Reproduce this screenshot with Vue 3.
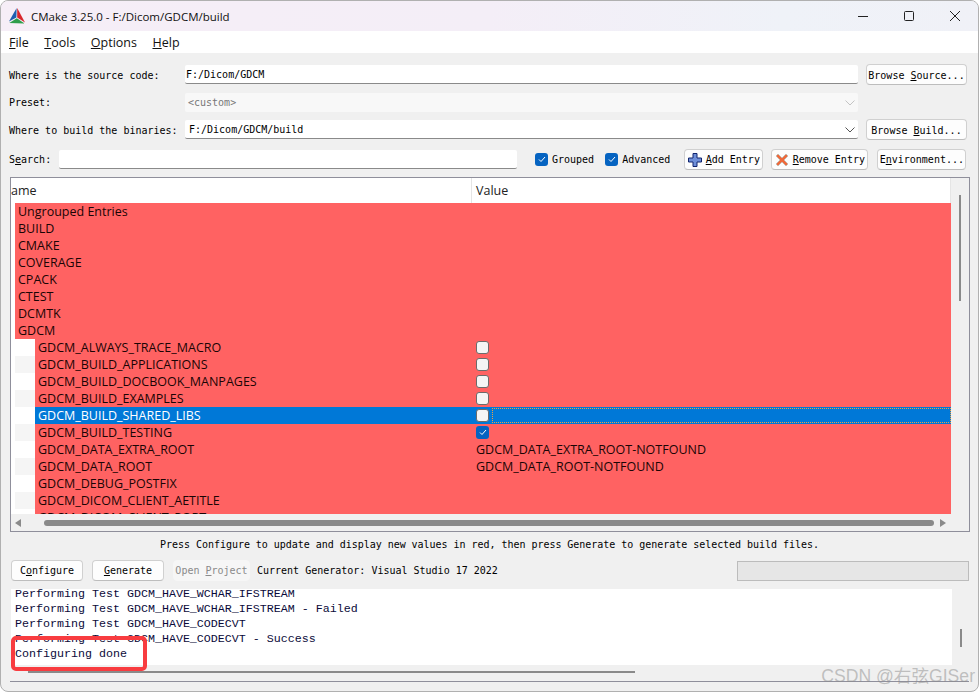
<script setup>
const topRows = ['Ungrouped Entries', 'BUILD', 'CMAKE', 'COVERAGE', 'CPACK', 'CTEST', 'DCMTK', 'GDCM']
const subRows = [
  { name: 'GDCM_ALWAYS_TRACE_MACRO', check: 'off' },
  { name: 'GDCM_BUILD_APPLICATIONS', check: 'off' },
  { name: 'GDCM_BUILD_DOCBOOK_MANPAGES', check: 'off' },
  { name: 'GDCM_BUILD_EXAMPLES', check: 'off' },
  { name: 'GDCM_BUILD_SHARED_LIBS', check: 'off', selected: true },
  { name: 'GDCM_BUILD_TESTING', check: 'on' },
  { name: 'GDCM_DATA_EXTRA_ROOT', value: 'GDCM_DATA_EXTRA_ROOT-NOTFOUND' },
  { name: 'GDCM_DATA_ROOT', value: 'GDCM_DATA_ROOT-NOTFOUND' },
  { name: 'GDCM_DEBUG_POSTFIX' },
  { name: 'GDCM_DICOM_CLIENT_AETITLE' },
  { name: 'GDCM_DICOM_CLIENT_PORT' }
]
const logLines = [
  'Performing Test GDCM_HAVE_WCHAR_IFSTREAM',
  'Performing Test GDCM_HAVE_WCHAR_IFSTREAM - Failed',
  'Performing Test GDCM_HAVE_CODECVT',
  'Performing Test GDCM_HAVE_CODECVT - Success',
  'Configuring done'
]
</script>

<template>
  <div class="window">
    <div class="titlebar">
      <svg class="logo" width="16" height="16" viewBox="0 0 16 16">
        <path d="M7.600 0 L0 13.600 L7.400 9.400 Z" fill="#1f5fb0" />
        <path d="M8.200 0 L8.200 9.400 L16 14.600 Z" fill="#d8262c" />
        <path d="M0.300 15 L7.800 10.200 L15.600 15.500 Z" fill="#2f9e4b" />
      </svg>
      <span class="title">CMake 3.25.0 - F:/Dicom/GDCM/build</span>
      <div class="winctl">
        <svg width="12" height="12" viewBox="0 0 12 12"><path d="M1 6.500H11" stroke="#222" stroke-width="1" /></svg>
        <svg width="12" height="12" viewBox="0 0 12 12"><rect x="1.500" y="1.500" width="9" height="9" rx="1" fill="none" stroke="#222" /></svg>
        <svg width="12" height="12" viewBox="0 0 12 12"><path d="M1 1L11 11M11 1L1 11" stroke="#222" stroke-width="1" /></svg>
      </div>
    </div>

    <div class="menubar">
      <span><u>F</u>ile</span>
      <span><u>T</u>ools</span>
      <span><u>O</u>ptions</span>
      <span><u>H</u>elp</span>
    </div>

    <div class="content">
      <div class="formrow r1">
        <label class="lbl">Where is the source code:</label>
        <div class="field">F:/Dicom/GDCM</div>
        <button class="btn browse"><span>Browse <u>S</u>ource...</span></button>
      </div>
      <div class="formrow r2">
        <label class="lbl">Preset:</label>
        <div class="field disabled">
          &lt;custom&gt;
          <svg class="chev" width="10" height="6" viewBox="0 0 10 6"><path d="M0.500 0.500L5 5L9.500 0.500" fill="none" stroke="#c4c4c4" /></svg>
        </div>
        <div class="browse spacer"></div>
      </div>
      <div class="formrow r3">
        <label class="lbl">Where to build the binaries:</label>
        <div class="field">
          F:/Dicom/GDCM/build
          <svg class="chev" width="10" height="6" viewBox="0 0 10 6"><path d="M0.500 0.500L5 5L9.500 0.500" fill="none" stroke="#555" /></svg>
        </div>
        <button class="btn browse"><span>Browse <u>B</u>uild...</span></button>
      </div>
      <div class="formrow r4">
        <label class="lbl">S<u>e</u>arch:</label>
        <div class="search"></div>
        <span class="opt grouped"><i class="cb on"><svg width="8" height="7" viewBox="0 0 8 7"><path d="M1 3.500L3 5.500L7 1" fill="none" stroke="#fff" /></svg></i>Grouped</span>
        <span class="opt advanced"><i class="cb on"><svg width="8" height="7" viewBox="0 0 8 7"><path d="M1 3.500L3 5.500L7 1" fill="none" stroke="#fff" /></svg></i>Advanced</span>
        <button class="btn add">
          <svg width="14" height="14" viewBox="0 0 14 14"><path d="M5 .5H9V5H13.500V9H9V13.500H5V9H.5V5H5Z" fill="#6f8fd8" stroke="#10246e" /></svg>
          <span><u>A</u>dd Entry</span>
        </button>
        <button class="btn remove">
          <svg width="14" height="14" viewBox="0 0 14 14"><path d="M1 3L3 1L7 5L11 1L13 3L9 7L13 11L11 13L7 9L3 13L1 11L5 7Z" fill="#ef6a3c" stroke="#c9b9ae" /></svg>
          <span><u>R</u>emove Entry</span>
        </button>
        <button class="btn env"><span>E<u>n</u>vironment...</span></button>
      </div>

      <div class="tree">
        <div class="tree-main">
          <div class="tree-head">
            <div class="hname">ame</div>
            <div class="hvalue">Value</div>
          </div>
          <div class="tree-rows">
            <div v-for="r in topRows" :key="r" class="row top">{{ r }}</div>
            <div v-for="(r, i) in subRows" :key="r.name" class="row sub" :class="{ alt: i % 2 === 1 }">
              <div class="cells" :class="{ sel: r.selected }">
                <div class="cname">{{ r.name }}</div>
                <div class="cvalue">
                  <i v-if="r.check === 'off'" class="cb off"></i>
                  <i v-else-if="r.check === 'on'" class="cb on"><svg width="8" height="7" viewBox="0 0 8 7"><path d="M1 3.500L3 5.500L7 1" fill="none" stroke="#fff" /></svg></i>
                  <template v-else>{{ r.value }}</template>
                  <div v-if="r.selected" class="focus"></div>
                </div>
              </div>
            </div>
          </div>
        </div>
        <div class="vscroll"><div class="vthumb tree-thumb"></div></div>
        <div class="hscroll">
          <svg width="7" height="8" viewBox="0 0 7 8"><path d="M6 0V8L0 4Z" fill="#8a8a8a" /></svg>
          <div class="hthumb"></div>
          <svg width="7" height="8" viewBox="0 0 7 8"><path d="M0 0V8L6 4Z" fill="#8a8a8a" /></svg>
        </div>
      </div>

      <div class="hint">Press Configure to update and display new values in red, then press Generate to generate selected build files.</div>

      <div class="actions">
        <button class="btn act"><span>C<u>o</u>nfigure</span></button>
        <button class="btn act"><span><u>G</u>enerate</span></button>
        <button class="btn open" disabled><span>Open <u>P</u>roject</span></button>
        <span class="gen">Current Generator: Visual Studio 17 2022</span>
        <div class="progress"></div>
      </div>

      <div class="log">
        <div class="logtext">
          <div v-for="l in logLines" :key="l" class="logline">{{ l }}</div>
        </div>
        <div class="logv"><div class="vthumb log-thumb"></div></div>
        <div class="logh"><div class="loghthumb"></div></div>
      </div>
    </div>

    <div class="mark"></div>
    <div class="water">CSDN @右弦GISer</div>
  </div>
</template>

<style>
html, body { margin: 0; background: #fff; }
</style>

<style scoped>
.window {
  position: relative;
  width: 979px;
  height: 692px;
  box-sizing: border-box;
  border: 1px solid #b0b0b0;
  border-radius: 8px;
  overflow: hidden;
  background: #f0f0f0;
  display: flex;
  flex-direction: column;
  font-family: "DejaVu Sans Mono", "Liberation Mono", monospace;
  font-size: 10px;
  color: #000;
}
.titlebar {
  height: 30px;
  flex: none;
  display: flex;
  align-items: center;
  background: linear-gradient(90deg, #f6eef7 0%, #f4eef7 50%, #eff2f8 80%, #f0f1f7 100%);
  padding-left: 8px;
  font-family: "Open Sans", sans-serif;
  font-size: 11.5px;
  color: #111;
}
.logo { margin-right: 6px; }
.title { white-space: nowrap; }
.winctl { margin-left: auto; display: flex; gap: 34px; margin-right: 17px; }
.menubar {
  height: 22px;
  flex: none;
  background: #fff;
  display: flex;
  align-items: center;
  gap: 15.500px;
  padding-left: 8px;
  font-family: "Open Sans", sans-serif;
  font-size: 12.500px;
  color: #111;
}
.content { flex: 1; display: flex; flex-direction: column; padding: 0 9px; min-height: 0; }
.formrow { display: flex; align-items: center; }
.r1 { margin-top: 11px; height: 21px; }
.r2 { margin-top: 7px; height: 20px; }
.r3 { margin-top: 7px; height: 21px; }
.r4 { margin-top: 9px; height: 21px; }
.lbl { width: 176px; margin-left: -1px; flex: none; white-space: nowrap; }
.r1 .lbl, .r3 .lbl { padding-top: 2px; }
.r4 .lbl { width: 50px; }
.field {
  position: relative;
  box-sizing: border-box;
  width: 673px;
  height: 19px;
  flex: none;
  background: #fff;
  border-bottom: 1px solid #8a8a8a;
  border-radius: 2px;
  line-height: 19px;
  padding-left: 1px;
  white-space: nowrap;
}
.field.disabled { background: #f8f8f8; color: #777; border-bottom: 0; padding-left: 3px; }
.r3 .field { padding-left: 4px; }
.chev { position: absolute; right: 3px; top: 7px; }
.btn {
  font: inherit;
  color: #000;
  background: #fdfdfd;
  border: 1px solid #d0d0d0;
  border-bottom-color: #bdbdbd;
  border-radius: 4px;
  padding: 0;
  height: 21px;
  white-space: nowrap;
  display: inline-flex;
  align-items: center;
  justify-content: center;
  box-sizing: border-box;
}
.browse { width: 101px; margin-left: 8px; flex: none; padding-top: 2px; }
.spacer { height: 1px; }
.search {
  box-sizing: border-box;
  width: 458px;
  height: 19px;
  background: #fff;
  border-bottom: 1px solid #8a8a8a;
  border-radius: 2px;
  flex: none;
}
.opt { display: inline-flex; align-items: center; gap: 4px; flex: none; white-space: nowrap; }
.grouped { margin-left: 18px; }
.advanced { margin-left: 11px; }
.cb {
  display: inline-flex;
  align-items: center;
  justify-content: center;
  box-sizing: border-box;
  width: 13px;
  height: 13px;
  border-radius: 3px;
  flex: none;
}
.cb.on { background: #0563c1; }
.cb.off { background: #f5f5f5; border: 1px solid #6b6b6b; }
.add { width: 79px; margin-left: 14px; gap: 4px; flex: none; }
.remove { width: 97px; margin-left: 8px; gap: 4px; flex: none; }
.env { width: 89px; margin-left: 9px; flex: none; }

.tree {
  box-sizing: border-box;
  margin-top: 7px;
  width: 960px;
  height: 355px;
  flex: none;
  border: 1px solid #8f8f9b;
  display: grid;
  grid-template-columns: 940px 18px;
  grid-template-rows: 336px 17px;
  background: #f0f0f0;
}
.tree-main { background: #fff; overflow: hidden; font-family: "Open Sans", sans-serif; font-size: 12.500px; color: #1a0505; }
.tree-head { height: 25px; display: flex; align-items: center; background: #fff; color: #222; border-right: 1px solid #e5e5e5; }
.hname { width: 461px; box-sizing: border-box; height: 25px; line-height: 25px; border-right: 1px solid #e5e5e5; flex: none; }
.hvalue { padding-left: 4px; }
.tree-rows { height: 311px; overflow: hidden; }
.row { height: 17px; line-height: 17px; margin-left: 4px; box-sizing: border-box; white-space: nowrap; }
.row.top { background: #ff6262; padding-left: 3px; }
.row.sub { display: block; background: #fff; padding-left: 20px; }
.row.sub.alt { background: #f5f5f5; }
.cells { display: flex; background: #ff6262; height: 17px; }
.cells.sel { background: #0078d7; color: #fff; }
.cname { width: 438px; padding-left: 3px; box-sizing: border-box; flex: none; }
.cvalue { position: relative; flex: 1; display: flex; align-items: center; padding-left: 3px; }
.focus { flex: 1; margin-left: 3px; height: 15px; border: 1px dotted #f0a040; box-sizing: border-box; }
.vscroll { grid-row: 1; grid-column: 2; position: relative; }
.vthumb { position: absolute; left: 8px; width: 2px; background: #8a8a8a; }
.tree-thumb { top: 17px; height: 106px; }
.hscroll { grid-row: 2; grid-column: 1 / 3; display: flex; align-items: center; padding: 1px 22px 0 4px; box-sizing: border-box; }
.hthumb { flex: 1; height: 6px; border-radius: 3px; background: #8a8a8a; margin: 0 6px 0 22px; }

.hint { height: 26px; line-height: 25px; text-align: center; flex: none; white-space: nowrap; letter-spacing: -0.030px; }
.actions { display: flex; align-items: center; height: 21px; flex: none; margin-top: 2px; margin-left: 1px; }
.act { width: 72px; margin-right: 9px; flex: none; }
.open { width: 77px; margin-left: 0; background: #f6f6f6; border-color: #f6f6f6; color: #8a8a8a; flex: none; }
.gen { margin-left: 7px; white-space: nowrap; }
.progress {
  margin-left: auto;
  width: 232px;
  height: 20px;
  box-sizing: border-box;
  background: #e6e6e6;
  border: 1px solid #bcbcbc;
}

.log {
  position: relative;
  margin-top: 8px;
  width: 958px;
  height: 93px;
  margin-left: 1px;
  flex: none;
  display: grid;
  grid-template-columns: 941px 17px;
  grid-template-rows: 76px 17px;
}
.logtext {
  background: #fff;
  padding-left: 4px;
  font-family: "Liberation Mono", monospace;
  font-size: 11.670px;
  line-height: 15px;
  color: #0b0b3a;
  white-space: nowrap;
}
.logline:first-child { margin-top: -2px; }
.logv { position: relative; background: #f0f0f0; }
.log-thumb { top: 40px; height: 18px; }
.logh { grid-column: 1 / 3; position: relative; border-bottom: 1px solid #8f8f9b; margin-left: -1px; }
.loghthumb { position: absolute; left: 18px; top: 6px; width: 607px; height: 2px; background: #8a8a8a; }

.mark {
  position: absolute;
  left: 10px;
  top: 635px;
  width: 136px;
  height: 35px;
  box-sizing: border-box;
  border: 4px solid #f83c40;
  border-radius: 5px;
}
.water {
  position: absolute;
  right: 3px;
  bottom: 4px;
  font-family: "Liberation Sans", "Noto Sans CJK SC", sans-serif;
  font-size: 17.600px;
  color: rgba(140, 140, 140, 0.5);
  white-space: nowrap;
}
</style>
